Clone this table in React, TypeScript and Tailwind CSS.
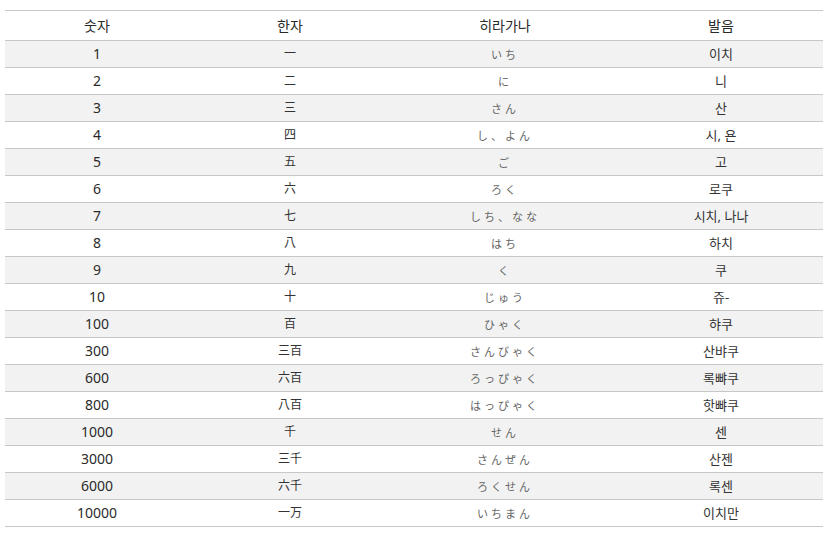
import React from 'react';

const rows: [string, string, string, string][] = [
  ['1', '一', 'いち', '이치'],
  ['2', '二', 'に', '니'],
  ['3', '三', 'さん', '산'],
  ['4', '四', 'し、よん', '시, 욘'],
  ['5', '五', 'ご', '고'],
  ['6', '六', 'ろく', '로쿠'],
  ['7', '七', 'しち、なな', '시치, 나나'],
  ['8', '八', 'はち', '하치'],
  ['9', '九', 'く', '쿠'],
  ['10', '十', 'じゅう', '쥬-'],
  ['100', '百', 'ひゃく', '햐쿠'],
  ['300', '三百', 'さんびゃく', '산뱌쿠'],
  ['600', '六百', 'ろっぴゃく', '록뺘쿠'],
  ['800', '八百', 'はっぴゃく', '핫뺘쿠'],
  ['1000', '千', 'せん', '센'],
  ['3000', '三千', 'さんぜん', '산젠'],
  ['6000', '六千', 'ろくせん', '록센'],
  ['10000', '一万', 'いちまん', '이치만'],
];

const font = { fontFamily: '"Noto Sans", "Noto Sans CJK KR", "Noto Sans CJK JP", sans-serif' };

const App = () => {
  return (
    <div className="bg-white w-[827px] h-[543px] pt-[10px] pl-[5px]" style={font}>
      <table className="w-[818px] border-collapse table-fixed text-[#2a2a2a]">
        <colgroup>
          <col className="w-[184px]" />
          <col className="w-[202px]" />
          <col className="w-[228px]" />
          <col className="w-[204px]" />
        </colgroup>
        <thead>
          <tr className="h-[30px] border-y border-[#c8c8c8] text-[14px]">
            <th className="font-normal text-center leading-none">숫자</th>
            <th className="font-normal text-center leading-none">한자</th>
            <th className="font-normal text-center leading-none">히라가나</th>
            <th className="font-normal text-center leading-none">발음</th>
          </tr>
        </thead>
        <tbody>
          {rows.map((r, i) => (
            <tr
              key={r[0]}
              className={`h-[27px] border-b border-[#c8c8c8] ${i % 2 === 0 ? 'bg-[#f2f2f2]' : 'bg-white'}`}
            >
              <td className="text-center text-[14px] leading-none">{r[0]}</td>
              <td className="text-center text-[12px] leading-none text-[#333]">{r[1]}</td>
              <td className="text-center text-[11px] leading-none tracking-[3px] text-[#666]">{r[2]}</td>
              <td className="text-center text-[13px] leading-none text-[#333]">{r[3]}</td>
            </tr>
          ))}
        </tbody>
      </table>
    </div>
  );
};

export default App;
